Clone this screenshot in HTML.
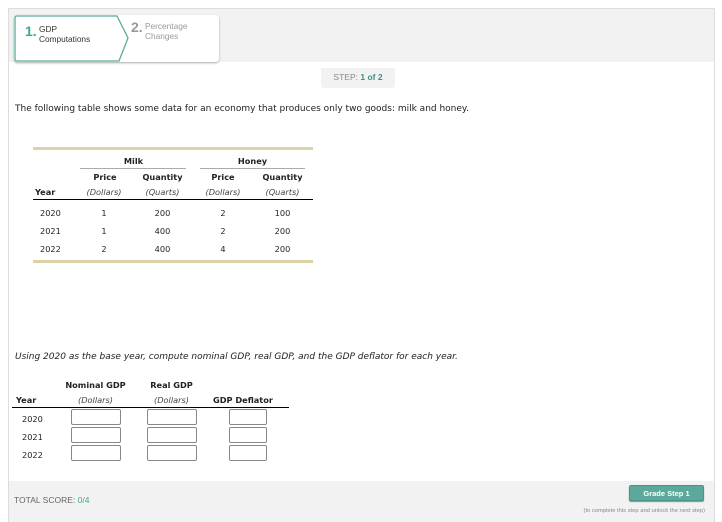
<!DOCTYPE html>
<html><head><style>
body{margin:0;width:722px;height:521px;background:#fff;font-family:"DejaVu Sans",Verdana,sans-serif;position:relative;overflow:hidden}
.abs{position:absolute}
.frame{left:8px;top:8px;width:705px;height:513px;border:1px solid #ddd;border-bottom:none;background:#f2f2f2}
.content{left:9px;top:62px;width:705px;height:419px;background:#fff}
.tabs{left:14px;top:15px;width:205px;height:47px;background:#fff;border-radius:3px;box-shadow:0 1px 2px #aaa}
.t{font-size:8.2px;color:#222;white-space:nowrap}
.c{text-align:center}
.it{font-style:italic;color:#444}
.b{font-weight:bold}
input{position:absolute;height:14px;border:1px solid #888;border-radius:2px;margin:0;padding:0;background:#fff}
</style></head><body>
<div class="abs frame"></div>
<div class="abs content"></div>
<div class="abs tabs"></div>
<svg class="abs" style="left:14px;top:15px" width="120" height="48"><path d="M1,3 Q1,1 3,1 L103,1 L114,23 L105,46 L3,46 Q1,46 1,44 Z" fill="#fff" stroke="#5aa99a" stroke-width="1.3"/></svg>
<div class="abs" style="left:25px;top:23px;font-family:'Liberation Sans',sans-serif;font-size:14px;font-weight:bold;color:#3da89a">1.</div>
<div class="abs" style="left:39px;top:24px;font-family:'Liberation Sans',sans-serif;font-size:8.3px;color:#333;line-height:10px">GDP<br>Computations</div>
<div class="abs" style="left:131px;top:19px;font-family:'Liberation Sans',sans-serif;font-size:14px;font-weight:bold;color:#999">2.</div>
<div class="abs" style="left:145px;top:21px;font-family:'Liberation Sans',sans-serif;font-size:8.3px;color:#999;line-height:10px">Percentage<br>Changes</div>
<div class="abs" style="left:321px;top:68px;width:74px;height:20px;background:#f2f2f2;border-radius:0 0 3px 3px;font-family:'Liberation Sans',sans-serif;font-size:8.5px;color:#888;text-align:center;line-height:18px">STEP: <b style="color:#3d8f87">1 of 2</b></div>
<div class="abs t" style="left:15px;top:104px;font-size:9px">The following table shows some data for an economy that produces only two goods: milk and honey.</div>
<div class="abs" style="left:33px;top:147px;width:280px;height:3px;background:#dcd2a8"></div>
<div class="abs" style="left:33px;top:260px;width:280px;height:3px;background:#dcd2a8"></div>
<div class="abs t b c" style="left:81px;top:156px;width:105px">Milk</div>
<div class="abs" style="left:80px;top:168px;width:106px;height:1px;background:#aaa"></div>
<div class="abs t b c" style="left:200px;top:156px;width:105px">Honey</div>
<div class="abs" style="left:200px;top:168px;width:105px;height:1px;background:#aaa"></div>
<div class="abs t b c" style="left:80px;top:172px;width:50px">Price</div>
<div class="abs t b c" style="left:135px;top:172px;width:55px">Quantity</div>
<div class="abs t b c" style="left:197px;top:172px;width:52px">Price</div>
<div class="abs t b c" style="left:255px;top:172px;width:55px">Quantity</div>
<div class="abs t b" style="left:35px;top:187px">Year</div>
<div class="abs t it c" style="left:78px;top:187px;width:52px">(Dollars)</div>
<div class="abs t it c" style="left:135px;top:187px;width:55px">(Quarts)</div>
<div class="abs t it c" style="left:197px;top:187px;width:52px">(Dollars)</div>
<div class="abs t it c" style="left:255px;top:187px;width:55px">(Quarts)</div>
<div class="abs" style="left:33px;top:199px;width:280px;height:1px;background:#000"></div>
<div class="abs t" style="left:40px;top:204px;line-height:18px">2020<br>2021<br>2022</div>
<div class="abs t c" style="left:78px;top:204px;width:52px;line-height:18px">1<br>1<br>2</div>
<div class="abs t c" style="left:135px;top:204px;width:55px;line-height:18px">200<br>400<br>400</div>
<div class="abs t c" style="left:197px;top:204px;width:52px;line-height:18px">2<br>2<br>4</div>
<div class="abs t c" style="left:255px;top:204px;width:55px;line-height:18px">100<br>200<br>200</div>
<div class="abs t it" style="left:15px;top:352px;color:#222;font-size:9px">Using 2020 as the base year, compute nominal GDP, real GDP, and the GDP deflator for each year.</div>
<div class="abs t b c" style="left:58px;top:380px;width:75px">Nominal GDP</div>
<div class="abs t b c" style="left:134px;top:380px;width:75px">Real GDP</div>
<div class="abs t b" style="left:16px;top:395px">Year</div>
<div class="abs t it c" style="left:58px;top:395px;width:75px">(Dollars)</div>
<div class="abs t it c" style="left:134px;top:395px;width:75px">(Dollars)</div>
<div class="abs t b" style="left:213px;top:395px">GDP Deflator</div>
<div class="abs" style="left:12px;top:407px;width:277px;height:1px;background:#000"></div>
<div class="abs t" style="left:22px;top:410px;line-height:18px">2020<br>2021<br>2022</div>
<input style="left:71px;top:409px;width:48px"><input style="left:147px;top:409px;width:48px"><input style="left:229px;top:409px;width:36px">
<input style="left:71px;top:427px;width:48px"><input style="left:147px;top:427px;width:48px"><input style="left:229px;top:427px;width:36px">
<input style="left:71px;top:445px;width:48px"><input style="left:147px;top:445px;width:48px"><input style="left:229px;top:445px;width:36px">
<div class="abs" style="left:14px;top:495px;font-family:'Liberation Sans',sans-serif;font-size:8.5px;color:#666">TOTAL SCORE: <span style="color:#3da89a">0/4</span></div>
<div class="abs" style="left:629px;top:485px;width:75px;height:16px;background:#5aa99a;border:1px solid #4a9488;border-radius:2px;box-shadow:0 1px 1px #888;color:#fff;font-family:'Liberation Sans',sans-serif;font-size:7.5px;font-weight:bold;text-align:center;line-height:15px;box-sizing:border-box">Grade Step 1</div>
<div class="abs" style="left:540px;top:508px;width:165px;text-align:right;font-family:'Liberation Sans',sans-serif;font-size:5.8px;color:#888">(to complete this step and unlock the next step)</div>
</body></html>
